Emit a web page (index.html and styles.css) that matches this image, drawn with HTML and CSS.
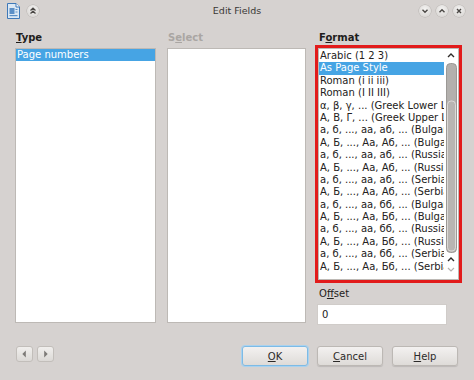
FILE: index.html
```html
<!DOCTYPE html>
<html>
<head>
  <title>Edit Fields</title>
  <link rel="stylesheet" href="styles.css">
</head>
<body>
  <div class="window">
    <header class="titlebar">
      <div class="title-left">
        <svg class="app-icon" width="13" height="16" viewBox="0 0 13 16">
          <path d="M0.5 0.5 H9 L12.5 4 V15.5 H0.5 Z" fill="#dbe8f4" stroke="#3f79b8"/>
          <path d="M9 0.5 V4 H12.5" fill="#ffffff" stroke="#3f79b8"/>
          <rect x="2.5" y="5" width="5" height="6" fill="#5b8fc7"/>
          <rect x="2.5" y="12" width="8" height="1.2" fill="#5b8fc7"/>
          <rect x="8.5" y="6" width="2" height="1" fill="#5b8fc7"/>
          <rect x="8.5" y="8.5" width="2" height="1" fill="#5b8fc7"/>
        </svg>
        <span class="round-btn">
          <svg width="12" height="12" viewBox="0 0 12 12">
            <path d="M3.5 5.5 L6 3.2 L8.5 5.5 M3.5 8.5 L6 6.2 L8.5 8.5" fill="none" stroke="#4a4744" stroke-width="1.3"/>
          </svg>
        </span>
      </div>
      <div class="title-text">Edit Fields</div>
      <div class="title-right">
        <span class="round-btn">
          <svg width="12" height="12" viewBox="0 0 12 12">
            <path d="M3.5 4.8 L6 7.3 L8.5 4.8" fill="none" stroke="#4a4744" stroke-width="1.4"/>
          </svg>
        </span>
        <span class="round-btn">
          <svg width="12" height="12" viewBox="0 0 12 12">
            <path d="M3.5 7.2 L6 4.7 L8.5 7.2" fill="none" stroke="#4a4744" stroke-width="1.4"/>
          </svg>
        </span>
        <span class="round-btn">
          <svg width="12" height="12" viewBox="0 0 12 12">
            <path d="M4 4 L8 8 M8 4 L4 8" fill="none" stroke="#4a4744" stroke-width="1.4"/>
          </svg>
        </span>
      </div>
    </header>

    <div class="main">
      <div class="column type-col">
        <div class="label"><u>T</u>ype</div>
        <div class="listbox tall">
          <div class="row selected">Page numbers</div>
        </div>
      </div>

      <div class="column select-col">
        <div class="label disabled">S<u>e</u>lect</div>
        <div class="listbox tall"></div>
      </div>

      <div class="column format-col">
        <div class="label">F<u>o</u>rmat</div>
        <div class="listbox format-list">
          <div class="rows">
            <div class="row">Arabic (1 2 3)</div>
            <div class="row selected">As Page Style</div>
            <div class="row">Roman (i ii iii)</div>
            <div class="row">Roman (I II III)</div>
            <div class="row">α, β, γ, ... (Greek Lower Letters)</div>
            <div class="row">Α, Β, Γ, ... (Greek Upper Letters)</div>
            <div class="row">а, б, ..., аа, аб, ... (Bulgarian)</div>
            <div class="row">А, Б, ..., Аа, Аб, ... (Bulgarian)</div>
            <div class="row">а, б, ..., аа, аб, ... (Russian)</div>
            <div class="row">А, Б, ..., Аа, Аб, ... (Russian)</div>
            <div class="row">а, б, ..., аа, аб, ... (Serbian)</div>
            <div class="row">А, Б, ..., Аа, Аб, ... (Serbian)</div>
            <div class="row">а, б, ..., аа, бб, ... (Bulgarian)</div>
            <div class="row">А, Б, ..., Аа, Бб, ... (Bulgarian)</div>
            <div class="row">а, б, ..., аа, бб, ... (Russian)</div>
            <div class="row">А, Б, ..., Аа, Бб, ... (Russian)</div>
            <div class="row">а, б, ..., аа, бб, ... (Serbian)</div>
            <div class="row">А, Б, ..., Аа, Бб, ... (Serbian)</div>
          </div>
          <svg class="scrollbar" width="14" height="230" viewBox="0 0 14 230">
            <path d="M4 8 L7 5 L10 8" fill="none" stroke="#2e2b29" stroke-width="1.4"/>
            <rect x="2.5" y="14.5" width="10" height="189" rx="4" fill="#b3b0ad" stroke="#9b9895"/>
            <rect x="3.5" y="52" width="8" height="150" rx="3.5" fill="#b8b5b2" stroke="#e4e2e0" stroke-width="0.8"/>
            <path d="M4 212 L7 209 L10 212" fill="none" stroke="#2e2b29" stroke-width="1.4"/>
            <path d="M4 219 L7 222 L10 219" fill="none" stroke="#b5b2af" stroke-width="1.2"/>
          </svg>
        </div>
        <div class="label offset-label">O<u>ff</u>set</div>
        <div class="textbox">0</div>
      </div>
    </div>

    <footer class="footer">
      <div class="nav">
        <span class="nav-btn">
          <svg width="17" height="16" viewBox="0 0 17 16">
            <path d="M10 4 L6 8 L10 12 Z" fill="#7d7a77"/>
          </svg>
        </span>
        <span class="nav-btn">
          <svg width="17" height="16" viewBox="0 0 17 16">
            <path d="M7 4 L11 8 L7 12 Z" fill="#7d7a77"/>
          </svg>
        </span>
      </div>
      <div class="actions">
        <button class="btn focused"><u>O</u>K</button>
        <button class="btn"><u>C</u>ancel</button>
        <button class="btn"><u>H</u>elp</button>
      </div>
    </footer>
  </div>
</body>
</html>
```

FILE: styles.css
```css
/* Reset default margin and padding */
* {
    margin: 0;
    padding: 0;
    box-sizing: border-box;
}

body {
    width: 474px;
    height: 380px;
    overflow: hidden;
    background-color: #d6d2d0;
    font-family: "DejaVu Sans", sans-serif;
    font-size: 10px;
    color: #232120;
}

.window {
    height: 380px;
    display: flex;
    flex-direction: column;
}

/* Title bar */
.titlebar {
    height: 24px;
    display: grid;
    grid-template-columns: 1fr auto 1fr;
    align-items: center;
}

.title-left {
    display: flex;
    align-items: center;
    padding-left: 7px;
    gap: 7px;
}

.app-icon {
    display: block;
    margin-top: -2px;
}

.title-text {
    font-size: 9.5px;
    color: #3a3836;
    margin-top: -3px;
}

.title-right {
    display: flex;
    justify-content: flex-end;
    align-items: center;
    gap: 5px;
    padding-right: 9px;
}

.round-btn {
    width: 12px;
    height: 12px;
    border-radius: 50%;
    background: radial-gradient(circle at 50% 35%, #f4f3f2, #d3d0cd);
    box-shadow: 0 0 0 0.5px #b4b0ad;
    display: flex;
    align-items: center;
    justify-content: center;
    margin-top: -2px;
}

.round-btn svg {
    display: block;
}

/* Main area */
.main {
    display: flex;
    align-items: flex-start;
    padding: 7px 0 0 15px;
}

.column {
    display: flex;
    flex-direction: column;
}

.type-col {
    width: 141px;
}

.select-col {
    width: 139px;
    margin-left: 11px;
}

.format-col {
    width: 141px;
    margin-left: 12px;
}

.label {
    font-weight: bold;
    line-height: 14px;
    height: 14px;
    margin-bottom: 3px;
    color: #1f1d1c;
    padding-left: 1px;
}

.label u {
    text-decoration-thickness: 1px;
    text-underline-offset: 1px;
}

.label.disabled {
    color: #aaa6a3;
}

.listbox {
    background-color: #ffffff;
    border: 1px solid #bdb9b5;
}

.listbox.tall {
    height: 275px;
}

.row {
    height: 12.4px;
    line-height: 12.4px;
    padding-left: 1px;
    white-space: nowrap;
    overflow: hidden;
}

.row.selected {
    background-color: #46a4e4;
    color: #ffffff;
}

.format-list {
    height: 232px;
    display: flex;
    outline: 3px solid #e21b1b;
    outline-offset: 0;
}

.rows {
    flex: 1;
    overflow: hidden;
    padding-top: 1px;
}

.scrollbar {
    display: block;
    flex: none;
}

.offset-label {
    margin-top: 7px;
    font-weight: normal;
}

.textbox {
    width: 130px;
    height: 21px;
    margin-left: -1px;
    background-color: #ffffff;
    border: 1px solid #d0ccc9;
    line-height: 19px;
    padding-left: 4px;
}

/* Footer buttons */
.footer {
    display: flex;
    justify-content: space-between;
    align-items: flex-start;
    margin-top: 21px;
    padding: 0 16px 0 16px;
}

.nav {
    display: flex;
    gap: 4px;
}

.nav-btn {
    width: 17px;
    height: 16px;
    border-radius: 3px;
    background: linear-gradient(#f1efed, #dcd9d6);
    border: 1px solid #c2beba;
    display: flex;
    align-items: center;
    justify-content: center;
}

.nav-btn svg {
    display: block;
}

.actions {
    display: flex;
    gap: 9px;
}

.btn {
    width: 66px;
    height: 20px;
    font-family: "DejaVu Sans", sans-serif;
    font-size: 10px;
    color: #2c2a28;
    border-radius: 3px;
    background: linear-gradient(#f3f1f0, #dedbd8);
    border: 1px solid #bcb8b4;
    box-shadow: 0 1px 1px rgba(0, 0, 0, 0.12);
}

.btn.focused {
    border-color: #7dbbe6;
    box-shadow: 0 0 0 1px #a9d2ef;
}
```
